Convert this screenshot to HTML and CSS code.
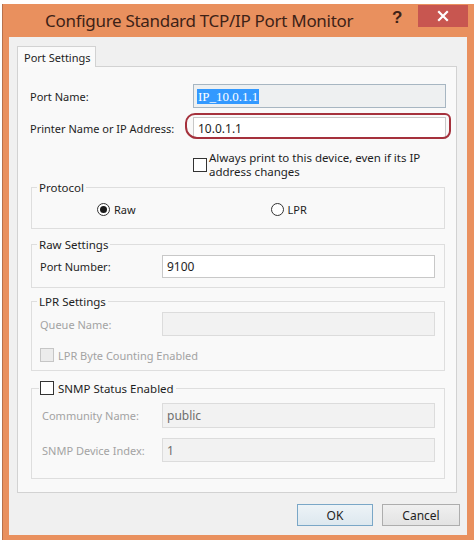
FILE: index.html
```html
<!DOCTYPE html>
<html lang="en">
<head>
<meta charset="utf-8">
<title>Configure Standard TCP/IP Port Monitor</title>
<link rel="stylesheet" href="styles.css">
</head>
<body>
<div class="window">
  <div class="titlebar">
    <div class="title">Configure Standard TCP/IP Port Monitor</div>
    <div class="help">?</div>
    <div class="close">
      <svg width="12" height="12" viewBox="0 0 12 12"><path d="M2 2 L10 10 M10 2 L2 10" stroke="#fff" stroke-width="2.2" stroke-linecap="square"/></svg>
    </div>
  </div>
  <div class="client">
    <div class="tabs"><div class="tab">Port Settings</div></div>
    <div class="page">
      <div class="row row-port">
        <span class="label">Port Name:</span>
        <div class="input readonly"><span class="selected">IP_10.0.1.1</span></div>
      </div>
      <div class="row row-printer">
        <span class="label">Printer Name or IP Address:</span>
        <div class="input">10.0.1.1</div>
        <div class="annotation"></div>
      </div>
      <div class="check-row">
        <span class="checkbox"></span>
        <span class="check-text">Always print to this device, even if its IP<br>address changes</span>
      </div>

      <fieldset class="group group-protocol">
        <legend>Protocol</legend>
        <div class="group-body radios">
          <div class="radio-item"><span class="radio checked"></span><span>Raw</span></div>
          <div class="radio-item"><span class="radio"></span><span>LPR</span></div>
        </div>
      </fieldset>

      <fieldset class="group group-raw">
        <legend>Raw Settings</legend>
        <div class="group-body">
          <div class="field">
            <span class="field-label">Port Number:</span>
            <div class="input">9100</div>
          </div>
        </div>
      </fieldset>

      <fieldset class="group group-lpr">
        <legend>LPR Settings</legend>
        <div class="group-body">
          <div class="field disabled">
            <span class="field-label">Queue Name:</span>
            <div class="input"></div>
          </div>
          <div class="field-check disabled">
            <span class="checkbox"></span><span>LPR Byte Counting Enabled</span>
          </div>
        </div>
      </fieldset>

      <fieldset class="group group-snmp">
        <legend><span class="checkbox"></span><span>SNMP Status Enabled</span></legend>
        <div class="group-body">
          <div class="field disabled snmp-field">
            <span class="field-label">Community Name:</span>
            <div class="input">public</div>
          </div>
          <div class="field disabled snmp-field second">
            <span class="field-label">SNMP Device Index:</span>
            <div class="input">1</div>
          </div>
        </div>
      </fieldset>
    </div>
    <div class="buttons">
      <div class="button default">OK</div>
      <div class="button">Cancel</div>
    </div>
  </div>
</div>
</body>
</html>
```

FILE: styles.css
```css
html, body {
  margin: 0;
  padding: 0;
  background: #ffffff;
}
body {
  font-family: "Noto Sans", "Open Sans", sans-serif;
  font-size: 11px;
  color: #1e1e1e;
}
.window {
  margin: 4px 0 0 2px;
  width: 472px;
  height: 536px;
  box-sizing: border-box;
  background: #e9905e;
  border-left: 1px solid #b7714c;
  padding: 0 7px 5px 6px;
  display: flex;
  flex-direction: column;
}
.titlebar {
  height: 33px;
  display: flex;
  align-items: flex-start;
  flex: none;
}
.title {
  font-size: 17px;
  letter-spacing: -0.3px;
  color: #3d2217;
  margin: 5px 0 0 36px;
  line-height: 24px;
  white-space: nowrap;
}
.help {
  margin: 3px 0 0 auto;
  font-size: 17px;
  font-weight: bold;
  color: #3d2217;
  line-height: 22px;
  width: 14px;
  font-family: "Liberation Sans", sans-serif;
}
.close {
  margin: 1px -1px 0 12px;
  width: 50px;
  height: 22px;
  background: #c85650;
  display: flex;
  align-items: center;
  justify-content: center;
}
.client {
  flex: 1;
  background: #f0f0f0;
  padding: 9px 7px 9px 8px;
  display: flex;
  flex-direction: column;
}
.tabs {
  display: flex;
  height: 20px;
  position: relative;
  z-index: 1;
}
.tab {
  width: 79px;
  height: 21px;
  box-sizing: border-box;
  border: 1px solid #d2d2d2;
  border-bottom: none;
  background: #fafafa;
  padding: 3px 0 0 6px;
  line-height: 15px;
}
.page {
  width: 440px;
  height: 427px;
  box-sizing: border-box;
  border: 1px solid #d2d2d2;
  background: #f9f9f9;
  padding: 17px 10px 0 12px;
}
.row {
  display: flex;
  align-items: center;
  position: relative;
}
.label {
  width: 163px;
  flex: none;
}
.input {
  flex: 1;
  box-sizing: border-box;
  height: 23px;
  border: 1px solid #abadb3;
  background: #ffffff;
  padding: 0 4px;
  display: flex;
  align-items: center;
}
.row-port .input {
  height: 24px;
  background: #eef0f1;
  border-color: #a7b6c2;
  padding-left: 3px;
}
.selected {
  background: #3399ff;
  color: #ffffff;
  font-family: "Liberation Serif", serif;
  font-size: 13px;
  line-height: 15px;
  padding: 0 1px;
}
.row-printer {
  margin-top: 9px;
}
.row-printer .input {
  height: 22px;
  border-color: #c8c8c8;
  padding-left: 4px;
  font-size: 12px;
}
.annotation {
  position: absolute;
  left: 155px;
  right: -5px;
  top: -4px;
  bottom: 0px;
  border: 2px solid #a5313c;
  border-radius: 10px 6px 8px 12px;
}
.check-row {
  display: flex;
  align-items: center;
  margin: 12px 0 0 163px;
  line-height: 14px;
}
.checkbox {
  width: 14px;
  height: 14px;
  box-sizing: border-box;
  border: 1px solid #333333;
  background: #ffffff;
  flex: none;
  margin-right: 2px;
}
.check-text {
  font-size: 11.5px;
}
.group {
  margin: 0 1px;
  padding: 0;
  border: 1px solid #dedede;
  min-width: 0;
}
.group legend {
  margin-left: 5px;
  padding: 0 2px;
  line-height: 15px;
  font-size: 11.5px;
}
.group-protocol {
  margin-top: 1px;
}
.group-protocol .group-body {
  padding: 6px 0 11px 65px;
}
.radios {
  display: flex;
  height: 16px;
}
.radio-item {
  width: 196px;
  display: flex;
  align-items: center;
}
.radio {
  width: 13px;
  height: 13px;
  box-sizing: border-box;
  border-radius: 50%;
  border: 1px solid #333333;
  background: #ffffff;
  margin-right: 4px;
  display: flex;
  align-items: center;
  justify-content: center;
}
.radio.checked::after {
  content: "";
  width: 7px;
  height: 7px;
  border-radius: 50%;
  background: #1a1a1a;
}
.group-raw {
  margin-top: 8px;
}
.group-raw .group-body {
  padding: 3px 9px 9px 8px;
}
.field {
  display: flex;
  align-items: center;
}
.field-label {
  width: 122px;
  flex: none;
}
.group-raw .input {
  border-color: #c8c8c8;
  font-size: 12px;
}
.group-lpr {
  margin-top: 6px;
}
.group-lpr .group-body {
  padding: 3px 9px 5px 8px;
}
.disabled {
  color: #a3a3a3;
}
.disabled .input {
  background: #f2f2f2;
  border-color: #dcdcdc;
  color: #6e6e6e;
  font-size: 12px;
}
.group-lpr .input {
  height: 24px;
}
.field-check {
  display: flex;
  align-items: center;
  height: 20px;
  margin-top: 9px;
}
.field-check .checkbox {
  border-color: #c6c6c6;
  background: #ececec;
  margin-right: 4px;
}
.group-snmp {
  margin-top: 9px;
}
.group-snmp .group-body {
  padding: 7px 9px 16px 8px;
}
.group-snmp legend {
  display: flex;
  align-items: center;
  height: 16px;
  margin-left: 7px;
  padding: 0 2px 0 1px;
}
.group-snmp legend .checkbox {
  margin-right: 4px;
}
.snmp-field .field-label {
  padding-left: 2px;
  width: 120px;
}
.snmp-field .input {
  height: 25px;
}
.snmp-field.second {
  margin-top: 10px;
}
.snmp-field.second .input {
  height: 24px;
}
.buttons {
  display: flex;
  justify-content: flex-end;
  gap: 9px;
  margin-top: 11px;
}
.button {
  height: 22px;
  box-sizing: border-box;
  border: 1px solid #adadad;
  background: linear-gradient(#f0f0f0, #e3e3e3);
  display: flex;
  align-items: center;
  justify-content: center;
  font-size: 12px;
  width: 78px;
}
.button.default {
  width: 76px;
  border-color: #7aa7c7;
  background: linear-gradient(#edf3f7, #dde8ef);
}
```
